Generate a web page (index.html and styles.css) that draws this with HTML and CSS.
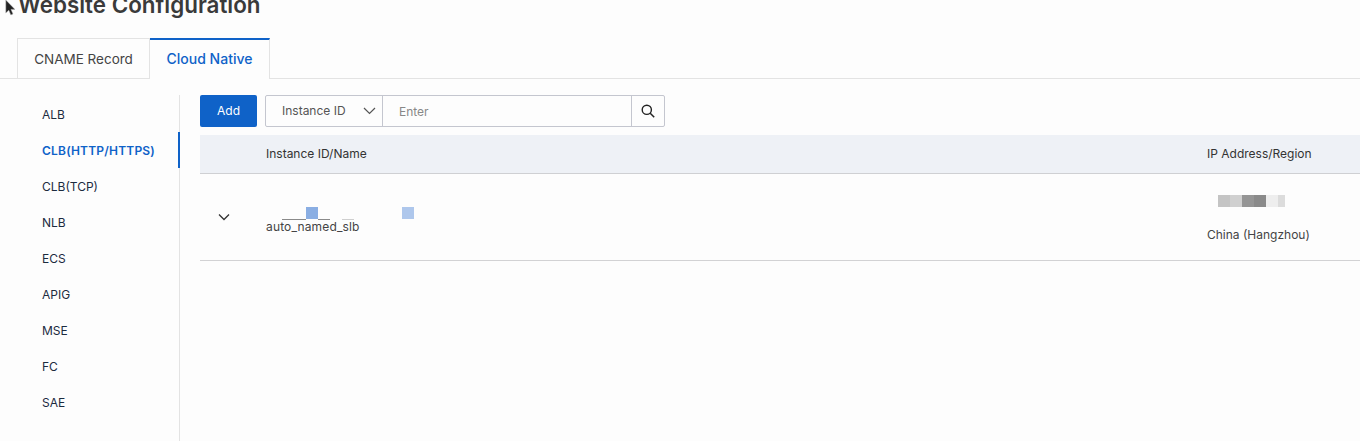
FILE: index.html
```html
<!DOCTYPE html>
<html lang="en">
<head>
<meta charset="utf-8">
<title>Website Configuration</title>
<link rel="stylesheet" href="styles.css">
</head>
<body>
<svg class="cursor" width="10" height="16" viewBox="0 0 10 16"><path d="M.8 0v13l3-2.8 2 4.8 2.2-1-2-4.6h4z" fill="#222" stroke="#bbb" stroke-width=".5"/></svg>
<h1 class="title">Website Configuration</h1>
<div class="tabs">
  <div class="tab">CNAME Record</div>
  <div class="tab tab-active">Cloud Native</div>
</div>
<div class="content">
  <nav class="side">
    <a class="side-item">ALB</a>
    <a class="side-item side-active">CLB(HTTP/HTTPS)</a>
    <a class="side-item">CLB(TCP)</a>
    <a class="side-item">NLB</a>
    <a class="side-item">ECS</a>
    <a class="side-item">APIG</a>
    <a class="side-item">MSE</a>
    <a class="side-item">FC</a>
    <a class="side-item">SAE</a>
  </nav>
  <main class="main">
    <div class="toolbar">
      <button class="btn-add">Add</button>
      <div class="search">
        <div class="search-select">
          <span>Instance ID</span>
          <svg width="13" height="8" viewBox="0 0 13 8"><path d="M1 1l5.5 5.5L12 1" fill="none" stroke="#555" stroke-width="1.2"/></svg>
        </div>
        <div class="search-input">Enter</div>
        <div class="search-btn">
          <svg width="14" height="14" viewBox="0 0 14 14"><circle cx="5.8" cy="5.8" r="4.6" fill="none" stroke="#222" stroke-width="1.4"/><path d="M9.2 9.2l4 4" stroke="#222" stroke-width="1.5"/></svg>
        </div>
      </div>
    </div>
    <div class="thead">
      <div class="col-expand"></div>
      <div class="col-name">Instance ID/Name</div>
      <div class="col-ip">IP Address/Region</div>
    </div>
    <div class="trow">
      <div class="col-expand">
        <svg width="12" height="8" viewBox="0 0 12 8"><path d="M1 1.5l5 5 5-5" fill="none" stroke="#333" stroke-width="1.3"/></svg>
      </div>
      <div class="col-name">
        <div class="mosaic-id">
          <i class="m m-line"></i><i class="m m-line"></i><i class="m m-blue"></i><i class="m m-line"></i>
          <i class="m"></i><i class="m m-line-light"></i><i class="m"></i><i class="m"></i><i class="m"></i><i class="m"></i><i class="m m-pale"></i>
        </div>
        <div class="name-text">auto_named_slb</div>
      </div>
      <div class="col-ip">
        <div class="mosaic-ip">
          <i class="p p1"></i><i class="p p2"></i><i class="p p3"></i><i class="p p4"></i><i class="p p5"></i><i class="p p6"></i>
        </div>
        <div class="region">China (Hangzhou)</div>
      </div>
    </div>
  </main>
</div>
</body>
</html>
```
FILE: styles.css
```css
* { box-sizing: border-box; }
html, body { margin: 0; height: 441px; overflow: hidden; }
body { background: #fdfdfd; font-family: Inter, "Noto Sans", sans-serif; font-size: 12px; color: #333; position: relative; }
.cursor { position: absolute; left: 5px; top: 0; }
.title { margin: -9px 0 0 18px; height: 47px; font-size: 22.4px; line-height: 28px; font-weight: 600; color: #3a3a3a; }
.tabs { display: flex; height: 41px; padding-left: 17px; border-bottom: 1px solid #e3e3e3; }
.tab { width: 133px; height: 41px; border: 1px solid #e3e3e3; background: #fdfdfd; font-size: 13.5px; line-height: 40px; text-align: center; color: #444; }
.tab-active { width: 120px; border-top: 2px solid #0f62c8; border-left: 0; border-bottom: 0; font-size: 14px; color: #0f62c8; font-weight: 500; line-height: 38px; }
.content { display: flex; padding-top: 16px; }
.side { width: 180px; height: 346px; border-right: 1px solid #e3e3e3; padding-top: 1px; flex: none; }
.side-item { display: block; height: 36px; line-height: 38px; padding-left: 42px; color: #1c2b3f; margin-right: -1px; }
.side-active { color: #0f62c8; font-weight: 600; letter-spacing: .2px; border-right: 2px solid #0f62c8; }
.main { margin-left: 20px; flex: 1; min-width: 0; }
.toolbar { display: flex; gap: 8px; height: 32px; margin-bottom: 8px; }
.btn-add { width: 57px; height: 32px; border: 0; border-radius: 2px; background: #0f62c8; color: #fff; font: 400 12px/30px Inter, sans-serif; padding: 0 0 1px; }
.search { display: flex; width: 400px; height: 32px; border: 1px solid #c4c6cf; border-radius: 2px; }
.search-select { width: 117px; display: flex; align-items: center; justify-content: space-between; padding: 0 6px 0 16px; border-right: 1px solid #c4c6cf; color: #555; flex: none; }
.search-select span { margin-top: -2px; }
.search-input { flex: 1; padding-left: 16px; line-height: 31px; color: #888; }
.search-btn { width: 33px; border-left: 1px solid #c4c6cf; display: flex; align-items: center; justify-content: center; flex: none; }
.thead { display: flex; align-items: center; height: 39px; padding-bottom: 2px; background: #eef1f6; border-bottom: 1px solid #cfd0d3; color: #333; }
.col-expand { width: 66px; flex: none; display: flex; justify-content: center; padding-right: 18px; }
.col-name { flex: 1; min-width: 0; }
.col-ip { width: 153px; flex: none; }
.trow { display: flex; align-items: center; height: 87px; border-bottom: 1px solid #d2d2d4; }
.mosaic-id { display: flex; height: 13px; margin-bottom: -1px; padding-left: 16px; }
.m { display: block; width: 12px; height: 13px; }
.m-line { border-bottom: 1px solid #8a8a8a; }
.m-line-light { border-bottom: 1px solid #cfcfcf; }
.m-blue { background: #8aaee3; height: 12px; }
.m-pale { background: #aec7ec; height: 12px; }
.name-text { line-height: 16px; color: #444; letter-spacing: .15px; }
.trow .col-name { margin-top: 7px; }
.trow .col-ip { margin-top: 4px; }
.mosaic-ip { display: flex; height: 12px; padding-left: 11px; margin-bottom: 20px; }
.p { display: block; width: 12px; height: 12px; }
.p1 { background: #c4c4c4; }
.p2 { background: #d0d0d0; }
.p3 { background: #959595; }
.p4 { background: #8a8a8a; }
.p5 { background: #eeeeee; }
.p6 { background: #dcdcdc; width: 7px; }
.region { line-height: 16px; color: #444; }
```
